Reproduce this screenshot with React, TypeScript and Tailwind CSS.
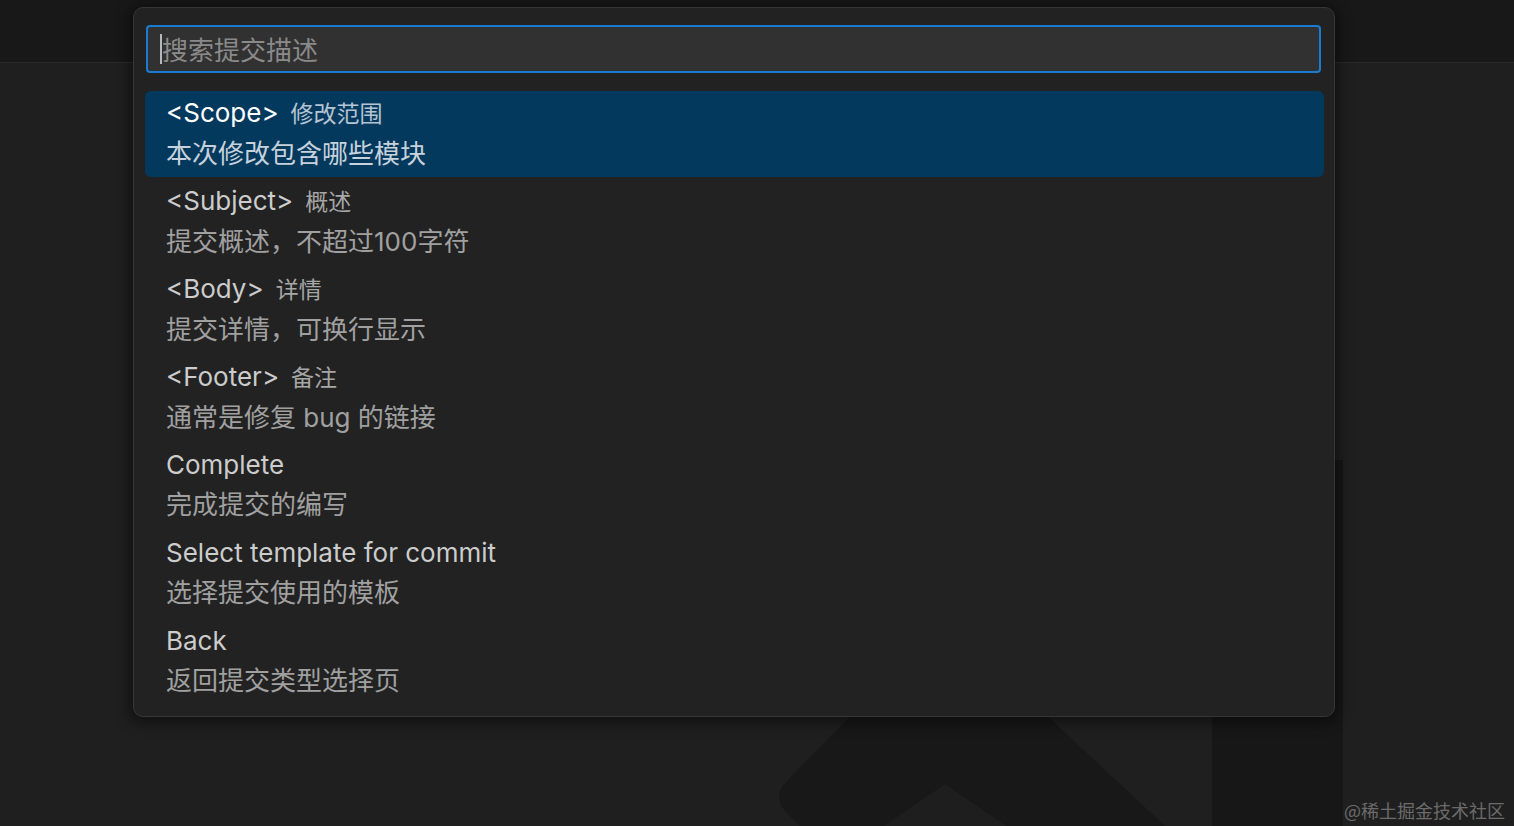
import React from "react";

type Item = {
  label: string;
  description?: string;
  detail: string;
};

const items: Item[] = [
  { label: "<Scope>", description: "修改范围", detail: "本次修改包含哪些模块" },
  { label: "<Subject>", description: "概述", detail: "提交概述，不超过100字符" },
  { label: "<Body>", description: "详情", detail: "提交详情，可换行显示" },
  { label: "<Footer>", description: "备注", detail: "通常是修复 bug 的链接" },
  { label: "Complete", detail: "完成提交的编写" },
  { label: "Select template for commit", detail: "选择提交使用的模板" },
  { label: "Back", detail: "返回提交类型选择页" },
];

const font = {
  fontFamily: '"Inter", "Noto Sans CJK SC", sans-serif',
};

const Watermark = () => (
  <svg
    className="absolute inset-0 pointer-events-none"
    width="1514"
    height="826"
    viewBox="0 0 1514 826"
  >
    <rect x="1212" y="460" width="131" height="366" fill="#171717" />
    <path
      d="M 800 826 L 786 812 Q 772 797 786 782 L 866 700 L 1030 700 L 1165 826 Z"
      fill="#181818"
    />
    <path d="M 884 826 L 945 784 L 1006 826 Z" fill="#1e1e1e" />
  </svg>
);

const QuickPickRow = ({ item, selected }: { item: Item; selected: boolean }) => {
  return (
    <div
      className={`h-[86px] rounded-[6px] pl-[21px] pt-[2px] pb-[4px] ${
        selected ? "bg-[#04395e]" : ""
      }`}
    >
      <div className="flex items-baseline leading-[40px] whitespace-nowrap">
        <span
          className={`text-[26px] ${selected ? "text-white" : "text-[#cccccc]"}`}
        >
          {item.label}
        </span>
        {item.description && (
          <span
            className={`ml-[12px] text-[23px] ${
              selected ? "text-[#b4c4d3]" : "text-[#a6a6a6]"
            }`}
          >
            {item.description}
          </span>
        )}
      </div>
      <div
        className={`text-[26px] leading-[40px] whitespace-nowrap ${
          selected ? "text-[#c7d2dc]" : "text-[#a0a0a0]"
        }`}
      >
        {item.detail}
      </div>
    </div>
  );
};

export default function App() {
  return (
    <div
      className="relative w-[1514px] h-[826px] overflow-hidden bg-[#1f1f1f]"
      style={font}
    >
      <div className="h-[63px] bg-[#181818] border-b border-[#2b2b2b]" />
      <Watermark />

      <div className="absolute left-[133px] top-[7px] w-[1202px] h-[710px] rounded-[10px] bg-[#222222] border border-[#363636] shadow-[0_2px_14px_4px_rgba(0,0,0,0.45)]">
        <div className="pt-[17px] pl-[12px] pr-[13px]">
          <div className="h-[48px] rounded-[4px] border-2 border-[#1a7bd0] bg-[#313131] flex items-center pl-[12px]">
            <span className="w-[2px] h-[30px] bg-[#b8b8b8]" />
            <span className="mt-[3px] text-[26px] text-[#8a8a8a] leading-none">
              搜索提交描述
            </span>
          </div>
        </div>

        <div className="mt-[18px] ml-[11px] mr-[10px] flex flex-col gap-[2px]">
          {items.map((item, i) => (
            <QuickPickRow key={item.label} item={item} selected={i === 0} />
          ))}
        </div>
      </div>

      <div
        className="absolute right-[9px] bottom-[7px] text-[18px] text-[#6b6b6b] leading-none"
        style={{ fontFamily: '"Noto Sans CJK SC", serif' }}
      >
        @稀土掘金技术社区
      </div>
    </div>
  );
}
